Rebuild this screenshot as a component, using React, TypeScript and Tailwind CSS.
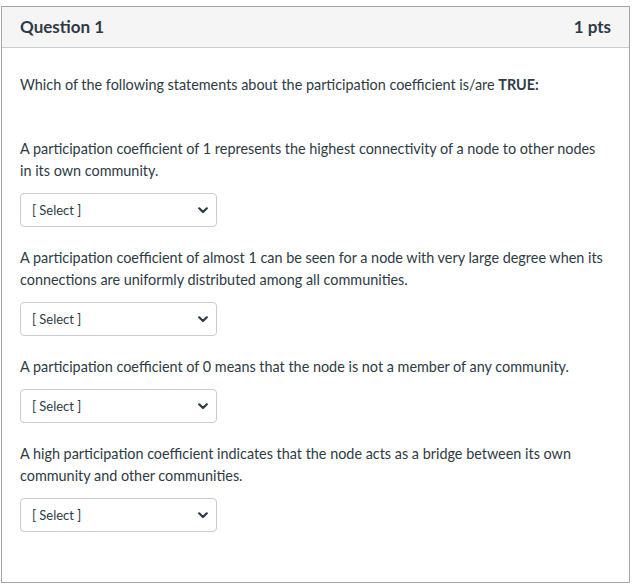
import React from "react";

function Select() {
  return (
    <div className="mt-[11px] w-[197px] h-[34px] border border-[#c7cdd1] rounded-[4px] bg-white flex items-center justify-between pl-[11px] pr-[8px]">
      <span className="text-[13px] text-[#2d3b45]">[ Select ]</span>
      <svg width="10" height="7" viewBox="0 0 10 7">
        <path d="M1.2 1.3 L5 5 L8.8 1.3" fill="none" stroke="#2d3b45" strokeWidth="2.2" strokeLinecap="round" strokeLinejoin="round" />
      </svg>
    </div>
  );
}

export default function App() {
  const items = [
    "A participation coefficient of 1 represents the highest connectivity of a node to other nodes in its own community.",
    "A participation coefficient of almost 1 can be seen for a node with very large degree when its connections are uniformly distributed among all communities.",
    "A participation coefficient of 0 means that the node is not a member of any community.",
    "A high participation coefficient indicates that the node acts as a bridge between its own community and other communities.",
  ];
  return (
    <div className="pl-[1px] pt-[6px] bg-white" style={{ fontFamily: "Lato, 'Open Sans', sans-serif" }}>
      <div className="w-[629px] h-[577px] border border-[#a5a5a5] bg-white text-[#2d3b45]">
        <div className="h-[41px] bg-[#f5f5f5] border-b border-[#c7cdd1] flex items-center justify-between pl-[18px] pr-[18px]">
          <span className="text-[17px] font-bold">Question 1</span>
          <span className="text-[17px] font-bold">1 pts</span>
        </div>
        <div className="pl-[18px] pr-[22px] pt-[26px] text-[14.4px] leading-[22px]">
          <p>
            Which of the following statements about the participation coefficient is/are <b>TRUE:</b>
          </p>
          <div className="mt-[42px]">
            {items.map((t, i) => (
              <div key={i} className={i === 0 ? "" : "mt-[20px]"}>
                <p>{t}</p>
                <Select />
              </div>
            ))}
          </div>
        </div>
      </div>
    </div>
  );
}
